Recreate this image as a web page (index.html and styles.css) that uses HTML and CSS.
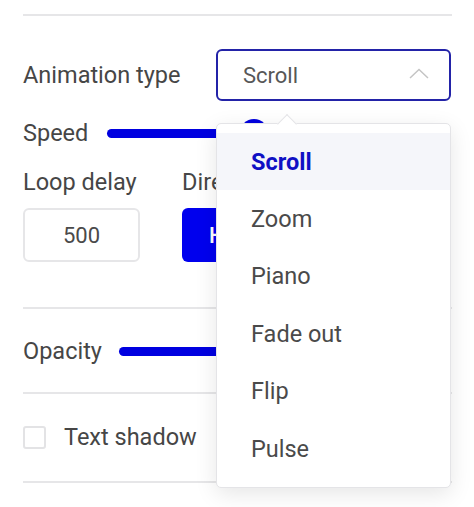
FILE: index.html
```html
<!DOCTYPE html>
<html>
<head>
<meta charset="utf-8">
<link rel="stylesheet" href="styles.css">
</head>
<body>
<div class="panel">
  <hr class="divider first">
  <div class="row type-row">
    <span class="label">Animation type</span>
    <div class="select">
      <span class="select-value">Scroll</span>
      <svg class="chevron" width="20" height="11" viewBox="0 0 20 11"><path d="M1 10 L10 1.5 L19 10" fill="none" stroke="#c4c4c4" stroke-width="1.5"/></svg>
    </div>
  </div>
  <div class="row speed-row">
    <span class="label">Speed</span>
    <div class="slider"><div class="track" style="width:42.6%"></div><div class="thumb" style="left:42.6%"></div></div>
  </div>
  <div class="pair">
    <div class="field">
      <span class="label">Loop delay</span>
      <div class="input">500</div>
    </div>
    <div class="field">
      <span class="label">Direction</span>
      <div class="btn">Horizontal</div>
    </div>
  </div>
  <hr class="divider">
  <div class="row opacity-row">
    <span class="label">Opacity</span>
    <div class="slider"><div class="track" style="width:60%"></div><div class="thumb" style="left:60%"></div></div>
  </div>
  <hr class="divider">
  <div class="row check-row">
    <span class="checkbox"></span>
    <span class="label">Text shadow</span>
  </div>
  <hr class="divider">

  <div class="menu">
    <div class="caret"></div>
    <div class="item active">Scroll</div>
    <div class="item">Zoom</div>
    <div class="item">Piano</div>
    <div class="item">Fade out</div>
    <div class="item">Flip</div>
    <div class="item">Pulse</div>
  </div>
</div>
</body>
</html>
```
FILE: styles.css
```css
html, body {
  margin: 0;
  padding: 0;
  background: #fff;
}
body {
  font-family: Roboto, "Liberation Sans", sans-serif;
  color: #464646;
  width: 474px;
  height: 507px;
  overflow: hidden;
}
.panel {
  position: relative;
  margin-left: 23px;
  width: 429px;
  padding-top: 14px;
}
.divider {
  border: 0;
  border-top: 2px solid #e6e6e8;
  margin: 0;
  height: 0;
}
.label {
  font-size: 23.5px;
  line-height: 26px;
  white-space: nowrap;
}
.row {
  display: flex;
  align-items: center;
}
.type-row {
  margin-top: 33px;
  justify-content: space-between;
}
.select {
  width: 235px;
  height: 52px;
  box-sizing: border-box;
  border: 2px solid #2323a8;
  border-radius: 6px;
  display: flex;
  align-items: center;
  justify-content: space-between;
  padding: 0 20px 0 25px;
  margin-right: 1px;
}
.select-value {
  font-size: 22px;
  color: #575757;
}
.chevron {
  display: block;
  margin-top: -3px;
}
.speed-row {
  margin-top: 19px;
  height: 26px;
}
.slider {
  position: relative;
  flex: 1;
  height: 9px;
  margin-left: 19px;
}
.track {
  height: 9px;
  background: #0000e0;
  border-radius: 5px;
}
.thumb {
  position: absolute;
  top: -10px;
  width: 28px;
  height: 28px;
  border-radius: 50%;
  background: #0000e0;
  margin-left: -14px;
}
.pair {
  display: flex;
  gap: 42px;
  margin-top: 23px;
}
.field {
  display: flex;
  flex-direction: column;
  align-items: flex-start;
  gap: 13px;
}
.input {
  width: 117px;
  height: 54px;
  box-sizing: border-box;
  border: 2px solid #e6e6e8;
  border-radius: 6px;
  display: flex;
  align-items: center;
  justify-content: center;
  font-size: 22px;
  color: #4a4a4a;
}
.btn {
  height: 54px;
  padding: 0 27px;
  border-radius: 6px;
  background: #0000ee;
  color: #fff;
  font-size: 22px;
  font-weight: 500;
  display: flex;
  align-items: center;
  justify-content: center;
}
.pair + .divider {
  margin-top: 45px;
}
.opacity-row {
  height: 26px;
  margin-top: 29px;
}
.opacity-row .slider {
  margin-left: 17px;
}
.opacity-row + .divider {
  margin-top: 28px;
}
.check-row {
  height: 26px;
  margin-top: 30px;
}
.checkbox {
  width: 23px;
  height: 23px;
  box-sizing: border-box;
  border: 2px solid #e3e3e5;
  border-radius: 3px;
  margin-right: 18px;
}
.check-row + .divider {
  margin-top: 31px;
}
.menu {
  position: absolute;
  left: 193px;
  top: 123px;
  width: 235px;
  box-sizing: border-box;
  background: #fff;
  border: 1px solid #e4e4e7;
  border-radius: 5px;
  box-shadow: 0 6px 22px rgba(0, 0, 0, 0.1);
  padding: 9px 0 10px;
}
.caret {
  position: absolute;
  top: -7px;
  left: 63px;
  width: 13px;
  height: 13px;
  background: #fff;
  border-left: 1px solid #e4e4e7;
  border-top: 1px solid #e4e4e7;
  transform: rotate(45deg);
}
.item {
  height: 57.4px;
  display: flex;
  align-items: center;
  padding-left: 34px;
  font-size: 23.5px;
  color: #4a4a4a;
  position: relative;
}
.item.active {
  background: #f5f6fa;
  color: #1010c4;
  font-weight: 700;
}
```
